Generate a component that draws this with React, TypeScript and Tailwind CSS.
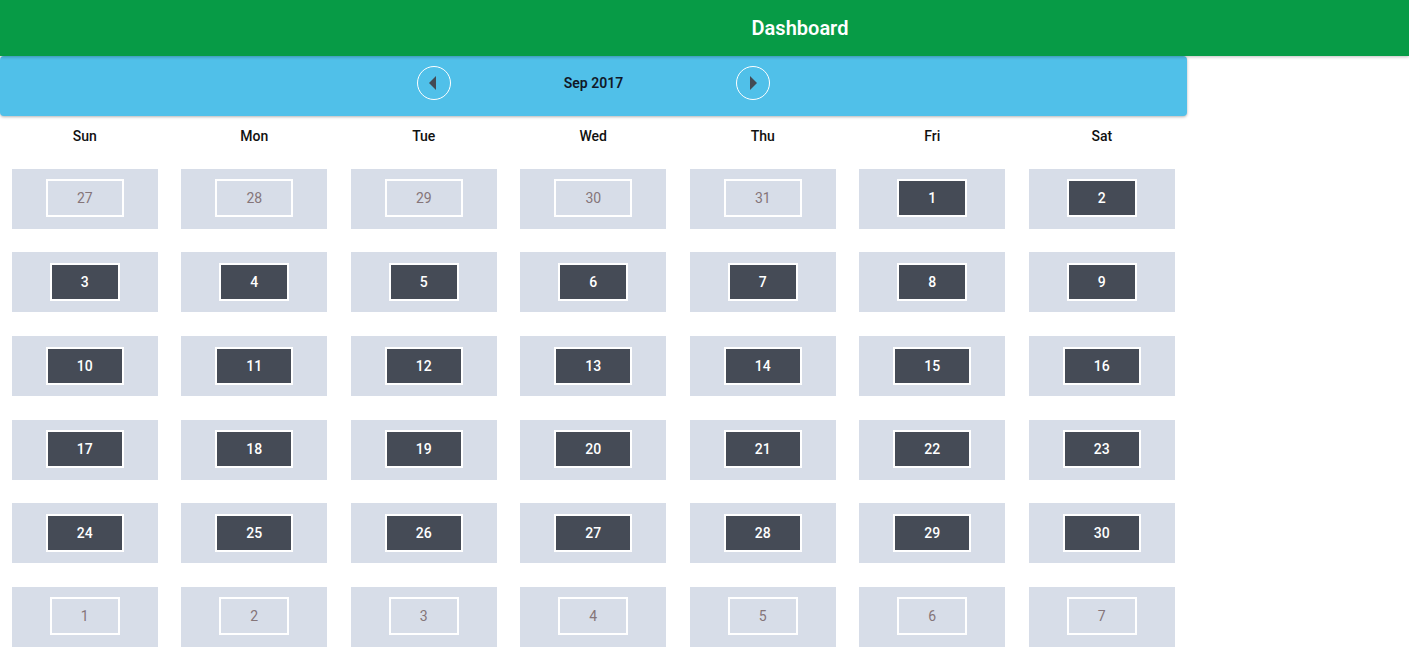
const days = ["Sun", "Mon", "Tue", "Wed", "Thu", "Fri", "Sat"];

type Day = { n: number; muted: boolean };

const cells: Day[] = [
  ...[27, 28, 29, 30, 31].map((n) => ({ n, muted: true })),
  ...Array.from({ length: 30 }, (_, i) => ({ n: i + 1, muted: false })),
  ...[1, 2, 3, 4, 5, 6, 7].map((n) => ({ n, muted: true })),
];

function Arrow({ dir }: { dir: "left" | "right" }) {
  return (
    <button className="h-[34px] w-[34px] rounded-full border border-white">
      <svg width="32" height="32" viewBox="0 0 32 32" className="block">
        <path d={dir === "left" ? "M18 9V23L11 16Z" : "M13 9V23L20 16Z"} fill="#434a54" />
      </svg>
    </button>
  );
}

export default function App() {
  return (
    <div className="min-h-[668px] bg-white font-['Roboto',sans-serif]">
      <header className="relative z-10 flex h-14 items-center bg-[#079b46] pl-[191px] shadow-[0_1px_3px_rgba(0,0,0,0.25)]">
        <h1 className="w-full text-center text-xl font-semibold text-white">Dashboard</h1>
      </header>
      <div className="w-[1187px]">
        <div className="flex h-[60px] justify-center rounded-[4px] bg-[#50c0e9] pt-2.5 shadow-[0_1px_3px_rgba(0,0,0,0.3)]">
          <div className="flex h-[34px] w-[353px] items-center justify-between">
            <Arrow dir="left" />
            <span className="-mt-px text-sm font-semibold text-[#111827]">Sep 2017</span>
            <Arrow dir="right" />
          </div>
        </div>
        <div className="grid grid-cols-[repeat(7,169.5px)]">
          {days.map((d) => (
            <div key={d} className="flex h-[52.75px] justify-center pt-3 text-sm leading-[16px] font-medium text-[#111]">
              {d}
            </div>
          ))}
          {cells.map((c, i) => (
            <div key={i} className="h-[83.6px] px-[11.75px]">
              <div className="flex h-[60px] items-start justify-center bg-[#d7dde8] pt-[10.6px]">
                <span
                  className={
                    c.muted
                      ? "flex h-[38px] items-center border-2 border-white px-[29px] text-sm text-[#857579]"
                      : "flex h-[38px] items-center border-2 border-white bg-[#454b56] px-[29px] text-sm font-medium text-white"
                  }
                >
                  {c.n}
                </span>
              </div>
            </div>
          ))}
        </div>
      </div>
    </div>
  );
}
